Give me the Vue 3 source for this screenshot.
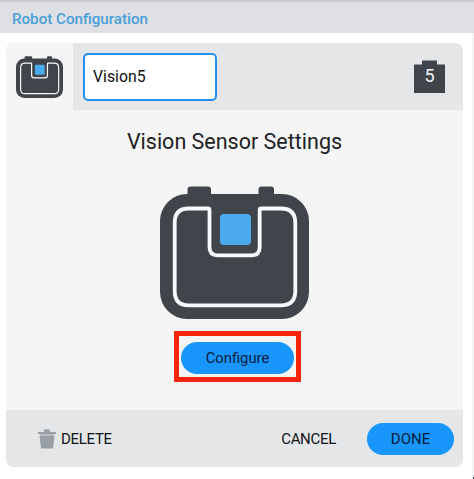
<script setup>
import { ref } from 'vue';

const deviceName = ref('Vision5');
const port = ref(5);
</script>

<template>
    <div class="page">
        <header class="titlebar">
            <span>Robot Configuration</span>
        </header>
        <main class="card">
            <div class="device-bar">
                <div class="device-tab">
                    <svg class="sensor-small" viewBox="0 0 149 133">
                        <use href="#vision-sensor" />
                    </svg>
                </div>
                <input class="device-name" v-model="deviceName" type="text" spellcheck="false">
                <div class="port">
                    <svg viewBox="0 0 31 33">
                        <path d="M0 4.5H8V0.5H23V4.5H31V33H0Z" fill="#40444b" />
                    </svg>
                    <span>{{ port }}</span>
                </div>
            </div>
            <section class="settings">
                <h2>Vision Sensor Settings</h2>
                <svg class="sensor-large" viewBox="0 0 149 133">
                    <g id="vision-sensor">
                        <rect x="27.5" y="0.5" width="23.5" height="16" rx="3" fill="#40454c" />
                        <rect x="98.5" y="0.5" width="15.5" height="16" rx="3" fill="#40454c" />
                        <rect x="0" y="8" width="149" height="125" rx="27" fill="#40454c" />
                        <path
                            d="M28.500 22.500H48Q49.500 22.500 49.500 24V61Q49.500 69.300 57.500 69.300H92Q99.700 69.300 99.700 61V24Q99.700 22.500 101.200 22.500H121Q135.300 22.500 135.300 37V105Q135.300 119.300 121 119.300H28.500Q14.700 119.300 14.700 105V37Q14.700 22.500 28.500 22.500Z"
                            fill="none" stroke="#f8f9fa" stroke-width="3.8" />
                        <rect x="60" y="28" width="31" height="31" rx="4" fill="#4ba9ee" />
                    </g>
                </svg>
                <div class="highlight">
                    <button class="pill configure">Configure</button>
                </div>
            </section>
            <footer class="actions">
                <button class="delete">
                    <svg viewBox="0 0 18 20">
                        <path d="M0 3H6V0.500H12V3H18V5H0Z M1.500 7H16.500L15 19.500H3Z" fill="#989fa5" />
                        <path d="M2 5H16V7H2Z" fill="#b9bdc1" />
                    </svg>
                    <span>DELETE</span>
                </button>
                <button class="cancel">CANCEL</button>
                <button class="pill done">DONE</button>
            </footer>
        </main>
    </div>
</template>

<style>
body {
    margin: 0;
    background-color: #ffffff;
}
</style>

<style scoped>
.page {
    box-sizing: border-box;
    width: 474px;
    height: 479px;
    overflow: hidden;
    font-family: Roboto, "Liberation Sans", sans-serif;
    color: #101418;
    background:
        linear-gradient(#44474a, #44474a) right bottom / 1px 2px no-repeat,
        linear-gradient(#f4f5f6, #f4f5f6) right top / 2px 100% no-repeat,
        #ffffff;
}

.titlebar {
    box-sizing: border-box;
    height: 33px;
    padding: 3px 0 0 12px;
    border-top: 2px solid #cbccd0;
    background-color: #dfe0e4;
    color: #4a9fd8;
    font-size: 15.15px;
    font-weight: 500;
    line-height: 28px;
}

.card {
    display: flex;
    flex-direction: column;
    width: 457px;
    height: 424px;
    margin: 10px 0 0 6px;
    border-radius: 8px;
    background-color: #f5f5f5;
    overflow: hidden;
}

.device-bar {
    display: flex;
    align-items: center;
    height: 67px;
    background-color: #e5e6e8;
}

.device-tab {
    display: flex;
    align-items: center;
    justify-content: center;
    width: 67px;
    height: 67px;
    background-color: #f5f5f5;
}

.sensor-small {
    width: 47px;
    height: 42px;
}

.device-name {
    box-sizing: border-box;
    width: 134px;
    height: 48px;
    margin-left: 10px;
    padding: 0 8px;
    border: 2px solid #2490ee;
    border-radius: 5px;
    outline: none;
    background-color: #ffffff;
    color: #101010;
    font-family: inherit;
    font-size: 15.8px;
}

.port {
    display: grid;
    width: 31px;
    height: 33px;
    margin: 0 18px 0 auto;
    color: #f2f3f4;
    font-size: 18px;
    line-height: 32px;
    text-align: center;
}

.port > * {
    grid-area: 1 / 1;
}

.settings {
    display: flex;
    flex: 1;
    flex-direction: column;
    align-items: center;
}

h2 {
    margin: 18px 0 0;
    font-size: 21.5px;
    font-weight: 400;
    line-height: 28px;
    color: #202124;
}

.sensor-large {
    width: 149px;
    height: 133px;
    margin-top: 30px;
}

.highlight {
    display: flex;
    align-items: center;
    justify-content: center;
    box-sizing: border-box;
    width: 127px;
    height: 51px;
    margin: 12px 0 0 6px;
    padding-top: 3px;
    border: 5px solid #f8240c;
}

button {
    padding: 0;
    border: none;
    background: none;
    color: inherit;
    font-family: inherit;
    font-size: 15px;
    letter-spacing: -0.3px;
    cursor: pointer;
}

.pill {
    height: 32px;
    border-radius: 16px;
    background-color: #1896fc;
    color: #071c38;
    letter-spacing: 0;
}

.configure {
    width: 113px;
    font-size: 14.8px;
}

.actions {
    display: flex;
    align-items: center;
    height: 57px;
    padding: 0 9px 0 32px;
    background-color: #e5e6e8;
}

.delete {
    display: flex;
    align-items: center;
    gap: 5px;
}

.delete svg {
    width: 18px;
    height: 20px;
}

.cancel {
    margin: 0 31px 0 auto;
}

.done {
    width: 87px;
}
</style>
